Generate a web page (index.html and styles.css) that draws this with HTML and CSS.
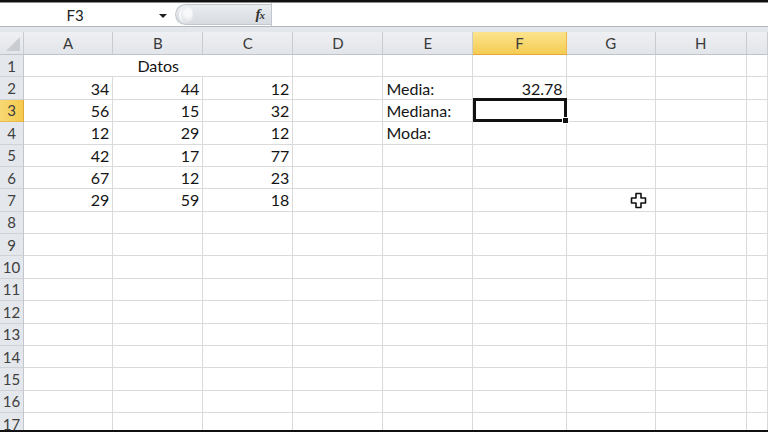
FILE: index.html
```html
<!DOCTYPE html>
<html lang="es">
<head>
<meta charset="utf-8">
<title>Hoja de cálculo</title>
<link rel="stylesheet" href="styles.css">
</head>
<body>
<div class="app">
  <div class="topstrip"></div>
  <div class="fbar">
    <div class="namebox"><span class="nb-text">F3</span><span class="nb-arrow"></span></div>
    <div class="pill"><span class="grip"></span><span class="fx">f<span class="fx-x">x</span></span></div>
    <div class="finput"></div>
  </div>
  <div class="band"></div>
  <div class="sheet">
    <div class="h corner"><svg class="corner-tri" width="14" height="14" viewBox="0 0 14 14"><polygon points="14,0 14,14 0,14" fill="#c9ccd1"/></svg></div>
    <div class="h">A</div><div class="h">B</div><div class="h">C</div><div class="h">D</div><div class="h">E</div><div class="h hs">F</div><div class="h">G</div><div class="h">H</div><div class="h"></div>

    <div class="rh">1</div><div class="c ctr span3">Datos</div><div class="c"></div><div class="c"></div><div class="c"></div><div class="c"></div><div class="c"></div><div class="c"></div>

    <div class="rh">2</div><div class="c n">34</div><div class="c n">44</div><div class="c n">12</div><div class="c"></div><div class="c">Media:</div><div class="c n">32.78</div><div class="c"></div><div class="c"></div><div class="c"></div>

    <div class="rh rhs">3</div><div class="c n">56</div><div class="c n">15</div><div class="c n">32</div><div class="c"></div><div class="c">Mediana:</div><div class="c active"><span class="sel"><span class="handle"></span></span></div><div class="c"></div><div class="c"></div><div class="c"></div>

    <div class="rh">4</div><div class="c n">12</div><div class="c n">29</div><div class="c n">12</div><div class="c"></div><div class="c">Moda:</div><div class="c"></div><div class="c"></div><div class="c"></div><div class="c"></div>

    <div class="rh">5</div><div class="c n">42</div><div class="c n">17</div><div class="c n">77</div><div class="c"></div><div class="c"></div><div class="c"></div><div class="c"></div><div class="c"></div><div class="c"></div>

    <div class="rh">6</div><div class="c n">67</div><div class="c n">12</div><div class="c n">23</div><div class="c"></div><div class="c"></div><div class="c"></div><div class="c"></div><div class="c"></div><div class="c"></div>

    <div class="rh">7</div><div class="c n">29</div><div class="c n">59</div><div class="c n">18</div><div class="c"></div><div class="c"></div><div class="c"></div><div class="c"></div><div class="c"></div><div class="c"></div>

    <div class="rh">8</div><div class="c"></div><div class="c"></div><div class="c"></div><div class="c"></div><div class="c"></div><div class="c"></div><div class="c"></div><div class="c"></div><div class="c"></div>
    <div class="rh">9</div><div class="c"></div><div class="c"></div><div class="c"></div><div class="c"></div><div class="c"></div><div class="c"></div><div class="c"></div><div class="c"></div><div class="c"></div>
    <div class="rh">10</div><div class="c"></div><div class="c"></div><div class="c"></div><div class="c"></div><div class="c"></div><div class="c"></div><div class="c"></div><div class="c"></div><div class="c"></div>
    <div class="rh">11</div><div class="c"></div><div class="c"></div><div class="c"></div><div class="c"></div><div class="c"></div><div class="c"></div><div class="c"></div><div class="c"></div><div class="c"></div>
    <div class="rh">12</div><div class="c"></div><div class="c"></div><div class="c"></div><div class="c"></div><div class="c"></div><div class="c"></div><div class="c"></div><div class="c"></div><div class="c"></div>
    <div class="rh">13</div><div class="c"></div><div class="c"></div><div class="c"></div><div class="c"></div><div class="c"></div><div class="c"></div><div class="c"></div><div class="c"></div><div class="c"></div>
    <div class="rh">14</div><div class="c"></div><div class="c"></div><div class="c"></div><div class="c"></div><div class="c"></div><div class="c"></div><div class="c"></div><div class="c"></div><div class="c"></div>
    <div class="rh">15</div><div class="c"></div><div class="c"></div><div class="c"></div><div class="c"></div><div class="c"></div><div class="c"></div><div class="c"></div><div class="c"></div><div class="c"></div>
    <div class="rh">16</div><div class="c"></div><div class="c"></div><div class="c"></div><div class="c"></div><div class="c"></div><div class="c"></div><div class="c"></div><div class="c"></div><div class="c"></div>
    <div class="rh">17</div><div class="c"></div><div class="c"></div><div class="c"></div><div class="c"></div><div class="c"></div><div class="c"></div><div class="c"></div><div class="c"></div><div class="c"></div>
  </div>
  <div class="bottomstrip"></div>
  <svg class="cursor" width="17" height="17" viewBox="0 0 17 17">
    <path d="M6 1.5 H11 V6 H15.5 V11 H11 V15.5 H6 V11 H1.5 V6 H6 Z" fill="#ffffff" stroke="#111111" stroke-width="1.6" stroke-linejoin="round"/>
  </svg>
</div>
</body>
</html>
```

FILE: styles.css
```css
* { box-sizing: border-box; }

html, body {
  margin: 0;
  padding: 0;
  width: 768px;
  height: 432px;
  overflow: hidden;
  background: #ffffff;
}

.app {
  position: relative;
  width: 768px;
  height: 432px;
  display: flex;
  flex-direction: column;
  font-family: "Lato", "Liberation Sans", sans-serif;
  color: #151515;
}

.topstrip {
  height: 3px;
  flex: none;
  background: linear-gradient(#111111 0, #111111 2px, #8a8a8a 2px);
}

.fbar {
  height: 24px;
  flex: none;
  display: flex;
  background: #ffffff;
  border-bottom: 1px solid #b4b8be;
}

.namebox {
  width: 175px;
  flex: none;
  display: flex;
  align-items: center;
}

.nb-text {
  width: 150px;
  text-align: center;
  font-size: 15px;
  color: #222222;
}

.nb-arrow {
  margin-left: 9px;
  width: 0;
  height: 0;
  border-left: 4px solid transparent;
  border-right: 4px solid transparent;
  border-top: 4px solid #202020;
  margin-top: 2px;
}

.pill {
  width: 96px;
  flex: none;
  margin: 1px 0;
  border-radius: 11px 0 0 11px;
  background: linear-gradient(#e9ecef, #d8dce1);
  border: 1px solid #c3c7cd;
  border-right: none;
  display: flex;
  align-items: center;
  justify-content: space-between;
  padding: 0 7px 0 3px;
}

.grip {
  width: 14px;
  height: 17px;
  border-radius: 50%;
  background: radial-gradient(circle at 60% 40%, #f7f8fa 30%, #dfe2e6 75%);
  border-left: 2px solid #f7f8fa;
}

.fx {
  font-family: "Liberation Serif", "DejaVu Serif", serif;
  font-style: italic;
  font-weight: bold;
  font-size: 15px;
  color: #333333;
  letter-spacing: -1px;
}

.fx-x {
  font-size: 11px;
}

.finput {
  flex: 1;
  border-left: 1px solid #c3c7cd;
  background: #ffffff;
}

.band {
  height: 5px;
  flex: none;
  background: #e3e6ea;
}

.sheet {
  flex: 1;
  overflow: hidden;
  display: grid;
  grid-template-columns: 24px 89.4px 89.9px 90px 90.2px 89.8px 93.4px 89.3px 90.7px 21.3px;
  grid-template-rows: 23px repeat(17, 22.375px);
  background: #ffffff;
}

.h {
  background: linear-gradient(#eef0f3, #e2e5e9);
  border-right: 1px solid #c8ccd1;
  border-bottom: 1px solid #c0c4ca;
  display: flex;
  align-items: center;
  justify-content: center;
  font-size: 15px;
  color: #3a3a3a;
}

.corner {
  position: relative;
  justify-content: flex-end;
  align-items: flex-end;
  padding: 0 3px 3px 0;
}

.hs {
  background: linear-gradient(#fbe38e, #f5cc52);
  border-right: 1px solid #e9b94a;
  border-bottom: 1px solid #e2a93a;
  color: #3a3a3a;
}

.rh {
  background: #e4e7eb;
  border-right: 1px solid #c3c7cd;
  border-bottom: 1px solid #cfd3d8;
  display: flex;
  align-items: center;
  justify-content: center;
  font-size: 15px;
  color: #404040;
}

.rhs {
  background: linear-gradient(90deg, #f8d874, #f4c94e);
  border-right: 1px solid #e2a93a;
  border-bottom: 1px solid #e9b94a;
}

.c {
  border-right: 1px solid #dadada;
  border-bottom: 1px solid #dadada;
  display: flex;
  align-items: center;
  padding: 0 3px;
  font-size: 16px;
  white-space: nowrap;
}

.n { justify-content: flex-end; }

.ctr { justify-content: center; }

.span3 { grid-column: span 3; }

.active { position: relative; }

.sel {
  position: absolute;
  left: 0;
  top: -2px;
  right: -1px;
  bottom: -1px;
  border: 3px solid #111111;
}

.handle {
  position: absolute;
  right: -5px;
  bottom: -5px;
  width: 7px;
  height: 7px;
  background: #111111;
  border: 1px solid #ffffff;
}

.bottomstrip {
  height: 2px;
  flex: none;
  background: #111111;
}

.cursor {
  position: absolute;
  left: 630px;
  top: 192px;
}
```
